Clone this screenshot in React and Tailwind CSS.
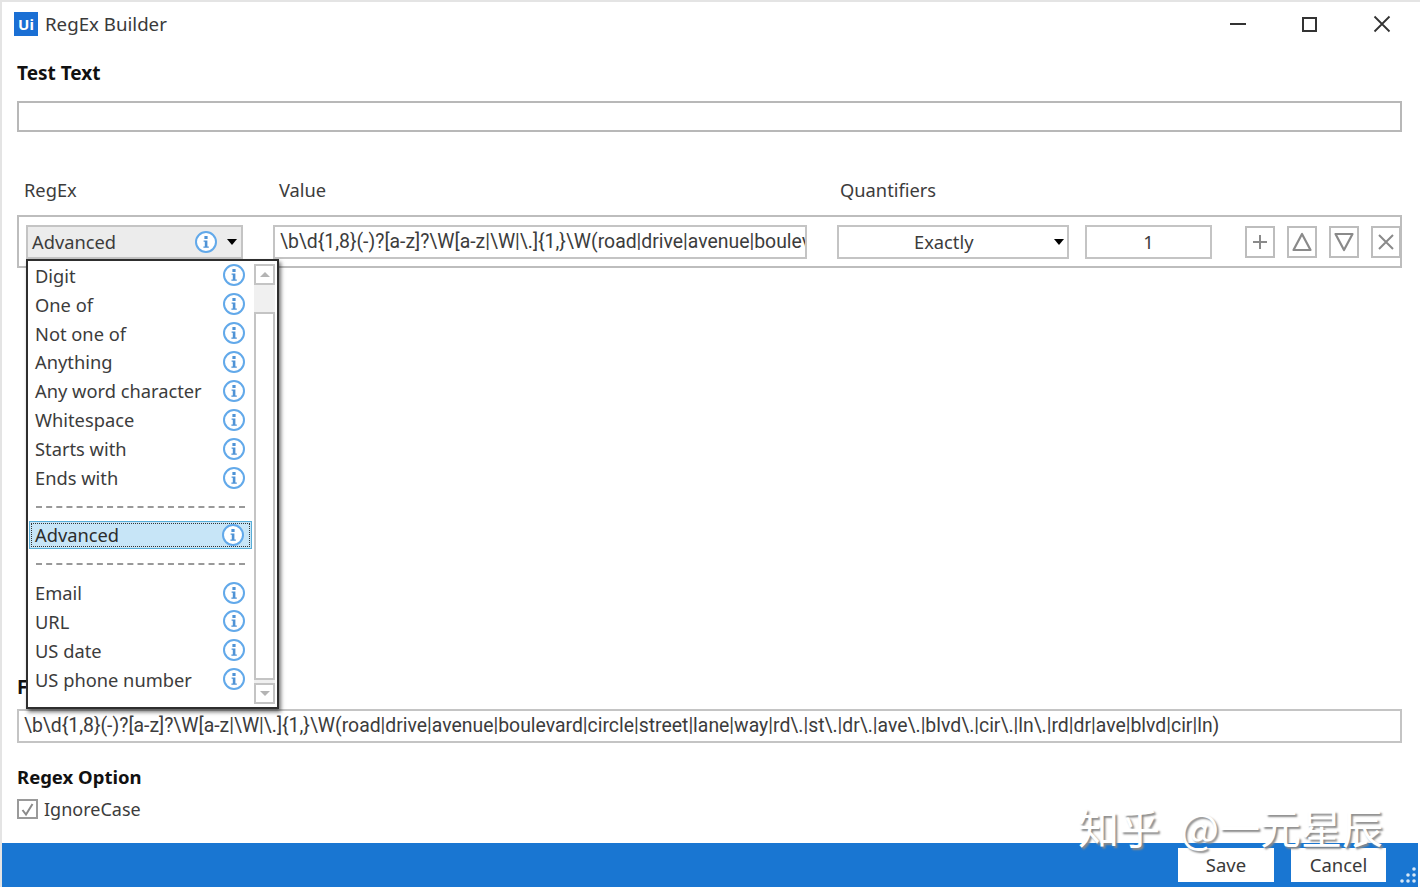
import React from 'react'

const FONT = "font-['Noto_Sans','Liberation_Sans',sans-serif]"
const REGEX_FONT = "font-['Roboto','Liberation_Sans',sans-serif]"

const regexText = '\\b\\d{1,8}(-)?[a-z]?\\W[a-z|\\W|\\.]{1,}\\W(road|drive|avenue|boulevard|circle|street|lane|way|rd\\.|st\\.|dr\\.|ave\\.|blvd\\.|cir\\.|ln\\.|rd|dr|ave|blvd|cir|ln)'

const topItems = ['Digit', 'One of', 'Not one of', 'Anything', 'Any word character', 'Whitespace', 'Starts with', 'Ends with']
const bottomItems = ['Email', 'URL', 'US date', 'US phone number']

function InfoIcon() {
  return (
    <svg width="22" height="22" viewBox="0 0 22 22" className="shrink-0">
      <circle cx="11" cy="11" r="10" fill="#fff" stroke="#62a9ea" strokeWidth="2" />
      <rect x="9.4" y="5" width="3.2" height="3" fill="#4f93d6" />
      <path d="M8.6 9.4h3.8v6h1.4v1.4H8.4v-1.4h1.4v-4.6H8.6z" fill="#4f93d6" />
    </svg>
  )
}

function Caret() {
  return <div className="w-0 h-0 border-x-[5px] border-x-transparent border-t-[6px] border-t-black" />
}

function DropItem({ label }) {
  return (
    <div className="h-[28.9px] flex items-center justify-between pl-[7px] pr-[8px] text-[18.3px] text-[#3c3c3c]">
      <span>{label}</span>
      <InfoIcon />
    </div>
  )
}

function Separator() {
  return <div className="h-[29px] flex items-center px-[8px]"><div className="w-full border-t-2 border-dashed border-[#999]" /></div>
}

function IconButton({ children }) {
  return (
    <div className="w-[30px] h-[32px] border-2 border-[#bdbdbd] flex items-center justify-center">
      {children}
    </div>
  )
}

function Dropdown() {
  return (
    <div className="absolute left-[24px] top-[257px] w-[253px] h-[450px] bg-white border-2 border-[#2e2e2e] shadow-[2px_3px_4px_rgba(0,0,0,0.55)] flex">
      <div className="w-[225px]">
        {topItems.map((t) => <DropItem key={t} label={t} />)}
        <Separator />
        <div className="h-[28px] mx-[1px] flex items-center justify-between pl-[5px] pr-[7px] bg-[#c7e5f7] border border-[#58aed8] outline-1 outline-dotted outline-offset-[-3px] outline-[#333] text-[18.3px] text-[#2c2c2c]">
          <span>Advanced</span>
          <InfoIcon />
        </div>
        <Separator />
        {bottomItems.map((t) => <DropItem key={t} label={t} />)}
      </div>
      <div className="w-[21px] ml-[1px] my-[3px] flex flex-col bg-[#f0f0f0]">
        <div className="h-[21px] bg-white border-2 border-[#c4c4c4] flex items-center justify-center">
          <div className="w-0 h-0 border-x-[5px] border-x-transparent border-b-[5px] border-b-[#b4b4b4]" />
        </div>
        <div className="h-[27px]" />
        <div className="h-[370px] bg-white border-2 border-[#c4c4c4]" />
        <div className="h-[3px]" />
        <div className="h-[21px] bg-white border-2 border-[#c4c4c4] flex items-center justify-center">
          <div className="w-0 h-0 border-x-[5px] border-x-transparent border-t-[5px] border-t-[#b4b4b4]" />
        </div>
      </div>
    </div>
  )
}

export default function App() {
  return (
    <div className={`relative w-[1420px] h-[887px] overflow-hidden bg-white border-l-2 border-t-2 border-[#e4e4e4] flex flex-col ${FONT}`}>
      {/* title bar */}
      <div className="h-[44px] shrink-0 flex items-center pl-[12px] pr-[29px]">
        <div className="w-[24px] h-[24px] bg-[#1a6fd4] text-white text-[15px] font-bold flex items-center justify-center">Ui</div>
        <span className="ml-[7px] text-[18.7px] text-[#3a3a3a]">RegEx Builder</span>
        <div className="ml-auto flex items-center gap-[56px]">
          <div className="w-[16px] h-[2px] bg-[#333]" />
          <div className="w-[15px] h-[15px] border-2 border-[#333]" />
          <svg width="18" height="18" viewBox="0 0 18 18"><path d="M1.5 1.5l15 15M16.5 1.5l-15 15" stroke="#333" strokeWidth="1.8" /></svg>
        </div>
      </div>

      <div className="flex-1 flex flex-col pl-[15px] pr-[18px]">
        <div className="h-[26px] mt-[14px] flex items-center text-[19px] font-bold text-[#111]">Test Text</div>
        <div className="h-[31px] mt-[15px] border-2 border-[#b8b8b8]" />

        {/* column labels */}
        <div className="h-[26px] mt-[45px] flex items-center text-[18.3px] text-[#3c3c3c]">
          <span className="ml-[7px] w-[255px]">RegEx</span>
          <span className="w-[561px]">Value</span>
          <span>Quantifiers</span>
        </div>

        {/* builder row */}
        <div className="h-[53px] mt-[12px] border-2 border-[#bdbdbd] flex items-center pl-[7px] text-[18.3px] text-[#3c3c3c]">
          <div className="w-[217px] h-[34px] shrink-0 bg-[#ececec] border-2 border-[#c4c4c4] flex items-center pl-[4px] pr-[4px]">
            <span>Advanced</span>
            <span className="ml-auto mr-[10px] flex"><InfoIcon /></span>
            <Caret />
          </div>
          <div className={`w-[534px] h-[34px] shrink-0 ml-[30px] border-2 border-[#c4c4c4] flex items-center pl-[5px] overflow-hidden whitespace-nowrap text-[19.4px] ${REGEX_FONT}`}>{regexText}</div>
          <div className="w-[232px] h-[34px] shrink-0 ml-[30px] border-2 border-[#c4c4c4] flex items-center pr-[3px]">
            <span className="ml-[75px]">Exactly</span>
            <span className="ml-auto"><Caret /></span>
          </div>
          <div className="w-[127px] h-[34px] shrink-0 ml-[16px] border-2 border-[#c4c4c4] flex items-center justify-center">1</div>
          <div className="ml-[33px] shrink-0 flex gap-[12px]">
            <IconButton>
              <svg width="18" height="18" viewBox="0 0 18 18"><path d="M9 2v14M2 9h14" stroke="#8a8a8a" strokeWidth="2" /></svg>
            </IconButton>
            <IconButton>
              <svg width="22" height="22" viewBox="0 0 22 22"><path d="M11 3L2.5 19h17z" fill="none" stroke="#8a8a8a" strokeWidth="2.2" strokeLinejoin="round" /></svg>
            </IconButton>
            <IconButton>
              <svg width="22" height="22" viewBox="0 0 22 22"><path d="M11 19L2.5 3h17z" fill="none" stroke="#8a8a8a" strokeWidth="2.2" strokeLinejoin="round" /></svg>
            </IconButton>
            <IconButton>
              <svg width="20" height="20" viewBox="0 0 20 20"><path d="M3 3l14 14M17 3L3 17" stroke="#8a8a8a" strokeWidth="2" /></svg>
            </IconButton>
          </div>
        </div>

        <div className="h-[26px] mt-[406px] flex items-center text-[19px] font-bold text-[#111]">Full Regex</div>
        <div className={`h-[34px] mt-[9px] border-2 border-[#c4c4c4] flex items-center pl-[5px] whitespace-nowrap text-[19.4px] text-[#3c3c3c] ${REGEX_FONT}`}>{regexText}</div>
        <div className="h-[26px] mt-[21px] flex items-center text-[18.5px] font-bold text-[#111]">Regex Option</div>
        <div className="h-[22px] mt-[8px] flex items-center text-[18px] text-[#3c3c3c]">
          <div className="w-[21px] h-[20px] border-2 border-[#9a9a9a] flex items-center justify-center">
            <svg width="15" height="15" viewBox="0 0 15 15"><path d="M2.5 8l3.5 4.5L12.5 2" fill="none" stroke="#8a8a8a" strokeWidth="2" /></svg>
          </div>
          <span className="ml-[6px]">IgnoreCase</span>
        </div>
      </div>

      {/* footer */}
      <div className="h-[44px] shrink-0 mr-[2px] bg-[#1976d2] flex items-center justify-end pr-[32px] gap-[17px] text-[18.5px] text-[#3a3a3a]">
        <div className="w-[96px] h-[34px] bg-white flex items-center justify-center">Save</div>
        <div className="w-[95px] h-[34px] bg-white flex items-center justify-center">Cancel</div>
      </div>

      <Dropdown />

      {/* watermark */}
      <div className="absolute left-[1076px] top-[800px] whitespace-nowrap text-[41px] leading-[48px] [word-spacing:11px] font-['Noto_Sans_CJK_SC','Noto_Sans',sans-serif] text-white [text-shadow:2px_2px_2px_#8a8a8a]">知乎 @一元星辰</div>

      {/* resize grip */}
      <svg className="absolute right-[1px] bottom-[1px]" width="22" height="20" viewBox="0 0 22 20" fill="#d8e8f6">
        <circle cx="17" cy="3" r="1.8" /><circle cx="11" cy="9" r="1.8" /><circle cx="17" cy="9" r="1.8" />
        <circle cx="5" cy="15" r="1.8" /><circle cx="11" cy="15" r="1.8" /><circle cx="17" cy="15" r="1.8" />
      </svg>
    </div>
  )
}
